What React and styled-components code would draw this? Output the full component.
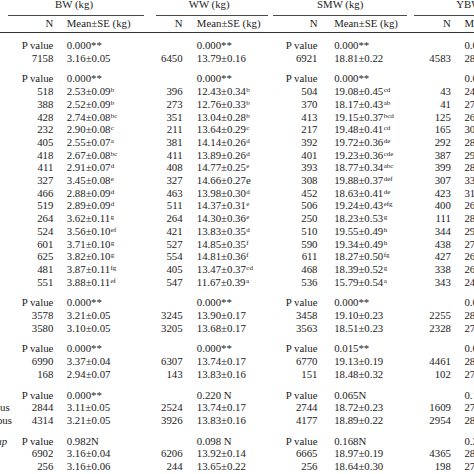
import React from 'react';
import styled, { createGlobalStyle } from 'styled-components';

const GlobalStyle = createGlobalStyle`
  html, body {
    margin: 0;
    padding: 0;
    background: #fff;
    overflow: hidden;
  }
  #root {
    width: 474px;
    height: 474px;
    overflow: hidden;
  }
`;

const Sheet = styled.div`
  width: 474px;
  height: 474px;
  overflow: hidden;
  background: #fff;
`;

const Table = styled.table`
  margin: -2px 0 0 -48px;
  width: 599px;
  table-layout: fixed;
  border-collapse: separate;
  border-spacing: 0;
  font-family: "Liberation Serif", "Times New Roman", serif;
  font-size: 10.8px;
  line-height: 12.7px;
  color: #1b1b1b;
`;

const Col = styled.col`
  width: ${(props) => props.$w}px;
`;

const GroupHead = styled.th`
  padding: 0;
  font-weight: normal;
  vertical-align: top;
  white-space: nowrap;
`;

const GroupTitle = styled.span`
  display: block;
  text-align: center;
  margin-right: ${(props) => props.$shift || 0}px;
`;

const Rule = styled.span`
  display: block;
  height: 1px;
  margin: 4px ${(props) => props.$r}px 0 ${(props) => props.$l}px;
  background: #4a4a4a;
`;

const SubHead = styled.th`
  padding: 1.6px 0 2px ${(props) => props.$pad || 0}px;
  font-weight: normal;
  text-align: ${(props) => props.$align};
  white-space: nowrap;
  border-bottom: 1.5px solid #333;
`;

const Group = styled.tbody`
  tr:first-child td {
    padding-top: ${(props) => props.$gap}px;
  }
`;

const LabelCell = styled.td`
  padding: 0;
  text-align: left;
  white-space: nowrap;
  font-style: ${(props) => (props.$italic ? 'italic' : 'normal')};
`;

const NCell = styled.td`
  padding: 0;
  text-align: right;
  white-space: nowrap;
`;

const MeanCell = styled.td`
  padding: 0 0 0 ${(props) => props.$pad}px;
  text-align: left;
  white-space: nowrap;
`;

const Sup = styled.sup`
  font-size: 7px;
  line-height: 0;
  vertical-align: 3px;
  margin-left: 0.4px;
`;

const traits = [
  { name: 'BW (kg)', pad: 13.4, shift: 10, l: -6, r: 0 },
  { name: 'WW (kg)', pad: 14.2, shift: 4, l: 12, r: 10 },
  { name: 'SMW (kg)', pad: 16.7, shift: 10, l: -5, r: 5 },
  { name: 'YBW (kg)', pad: 13.5, shift: 5, l: 2, r: 0 },
];

const widths = [62, 39.3, 90.7, 38.5, 95.5, 39.3, 94.7, 38.7, 100];

// each row: label, then N / Mean±SE for BW, WW, SMW, YBW ("^" marks a superscript)
const groups = [
  {
    title: 'Total',
    gap: 6,
    rows: [
      ['', 'P value', '0.000**', '', '0.000**', 'P value', '0.000**', '', '0.000**'],
      ['', '7158', '3.16±0.05', '6450', '13.79±0.16', '6921', '18.81±0.22', '4583', '28.36±0.29'],
    ],
  },
  {
    title: 'Year',
    gap: 8,
    rows: [
      ['', 'P value', '0.000**', '', '0.000**', 'P value', '0.000**', '', '0.000**'],
      ['2003', '518', '2.53±0.09^b', '396', '12.43±0.34^b', '504', '19.08±0.45^cd', '43', '24.87±1.12^a'],
      ['2004', '388', '2.52±0.09^b', '273', '12.76±0.33^b', '370', '18.17±0.43^ab', '41', '27.15±1.18^b'],
      ['2005', '428', '2.74±0.08^bc', '351', '13.04±0.28^b', '413', '19.15±0.37^bcd', '125', '26.40±0.71^b'],
      ['2006', '232', '2.90±0.08^c', '211', '13.64±0.29^c', '217', '19.48±0.41^cd', '165', '30.12±0.66^d'],
      ['2007', '405', '2.55±0.07^a', '381', '14.14±0.26^d', '392', '19.72±0.36^de', '292', '28.64±0.52^c'],
      ['2008', '418', '2.67±0.08^bc', '411', '13.89±0.26^d', '401', '19.23±0.36^cde', '387', '29.05±0.47^c'],
      ['2009', '411', '2.91±0.07^d', '408', '14.77±0.25^e', '393', '18.77±0.34^abc', '399', '28.31±0.45^c'],
      ['2010', '327', '3.45±0.08^e', '327', '14.66±0.27e', '308', '19.88±0.37^def', '307', '33.02±0.51^e'],
      ['2011', '466', '2.88±0.09^d', '463', '13.98±0.30^d', '452', '18.63±0.41^de', '423', '31.27±0.48^d'],
      ['2012', '519', '2.89±0.09^d', '511', '14.37±0.31^e', '506', '19.24±0.43^efg', '400', '26.93±0.50^b'],
      ['2013', '264', '3.62±0.11^g', '264', '14.30±0.36^e', '250', '18.23±0.53^g', '111', '28.44±0.84^c'],
      ['2014', '524', '3.56±0.10^ef', '421', '13.83±0.35^d', '510', '19.55±0.49^h', '344', '29.18±0.55^c'],
      ['2015', '601', '3.71±0.10^g', '527', '14.85±0.35^f', '590', '19.34±0.49^h', '438', '27.60±0.52^b'],
      ['2016', '625', '3.82±0.10^g', '554', '14.81±0.36^f', '611', '18.27±0.50^fg', '427', '26.71±0.54^b'],
      ['2017', '481', '3.87±0.11^fg', '405', '13.47±0.37^cd', '468', '18.39±0.52^g', '338', '26.25±0.58^b'],
      ['2018', '551', '3.88±0.11^ef', '547', '11.67±0.39^a', '536', '15.79±0.54^a', '343', '24.36±0.60^a'],
    ],
  },
  {
    title: 'Sex',
    gap: 8,
    rows: [
      ['', 'P value', '0.000**', '', '0.000**', 'P value', '0.000**', '', '0.000**'],
      ['Male', '3578', '3.21±0.05', '3245', '13.90±0.17', '3458', '19.10±0.23', '2255', '28.92±0.31'],
      ['Female', '3580', '3.10±0.05', '3205', '13.68±0.17', '3563', '18.51±0.23', '2328', '27.48±0.30'],
    ],
  },
  {
    title: 'Birth type',
    gap: 8,
    rows: [
      ['', 'P value', '0.000**', '', '0.000**', 'P value', '0.015**', '', '0.004**'],
      ['Single', '6990', '3.37±0.04', '6307', '13.74±0.17', '6770', '19.13±0.19', '4461', '28.27±0.26'],
      ['Twin', '168', '2.94±0.07', '143', '13.83±0.16', '151', '18.48±0.32', '102', '27.09±0.62'],
    ],
  },
  {
    title: 'Zygosity',
    gap: 8,
    rows: [
      ['', 'P value', '0.000**', '', '0.220 N', 'P value', '0.065N', '', '0.131N'],
      ['Homozygous', '2844', '3.11±0.05', '2524', '13.74±0.17', '2744', '18.72±0.23', '1609', '27.94±0.33'],
      ['Heterozygous', '4314', '3.21±0.05', '3926', '13.83±0.16', '4177', '18.89±0.22', '2954', '28.20±0.29'],
    ],
  },
  {
    title: 'Parity group',
    gap: 8,
    rows: [
      ['', 'P value', '0.982N', '', '0.098 N', 'P value', '0.168N', '', '0.207N'],
      ['First', '6902', '3.16±0.04', '6206', '13.92±0.14', '6665', '18.97±0.19', '4365', '28.11±0.25'],
      ['Others', '256', '3.16±0.06', '244', '13.65±0.22', '256', '18.64±0.30', '198', '27.56±0.58'],
    ],
  },
];

const Mean = ({ text }) => {
  const [value, sup] = text.split('^');
  return (
    <>
      {value}
      {sup && <Sup>{sup}</Sup>}
    </>
  );
};

const App = () => {
  return (
    <Sheet>
      <GlobalStyle />
      <Table>
        <colgroup>
          {widths.map((w, i) => <Col key={i} $w={w} />)}
        </colgroup>
        <thead>
          <tr>
            <GroupHead />
            {traits.map((t) => (
              <GroupHead key={t.name} colSpan={2}>
                <GroupTitle $shift={t.shift}>{t.name}</GroupTitle>
                <Rule $l={t.l} $r={t.r} />
              </GroupHead>
            ))}
          </tr>
          <tr>
            <SubHead $align="left" />
            {traits.map((t) => (
              <React.Fragment key={t.name}>
                <SubHead $align="right">N</SubHead>
                <SubHead $align="left" $pad={t.pad}>Mean±SE (kg)</SubHead>
              </React.Fragment>
            ))}
          </tr>
        </thead>
        {groups.map((g) => (
          <Group key={g.title} $gap={g.gap}>
            {g.rows.map((row, r) => (
              <tr key={r}>
                <LabelCell $italic={r === 0}>{r === 0 ? g.title : row[0]}</LabelCell>
                {traits.map((t, i) => (
                  <React.Fragment key={t.name}>
                    <NCell>{row[1 + i * 2]}</NCell>
                    <MeanCell $pad={t.pad}>
                      <Mean text={row[2 + i * 2]} />
                    </MeanCell>
                  </React.Fragment>
                ))}
              </tr>
            ))}
          </Group>
        ))}
      </Table>
    </Sheet>
  );
};

export default App;
